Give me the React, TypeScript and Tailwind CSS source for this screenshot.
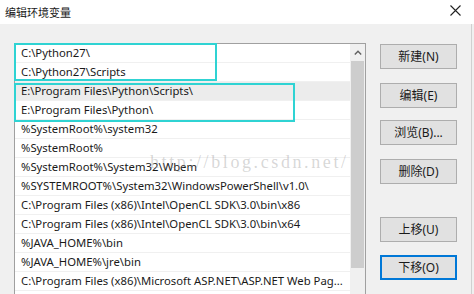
import React from "react";

const rows = [
  "C:\\Python27\\",
  "C:\\Python27\\Scripts",
  "E:\\Program Files\\Python\\Scripts\\",
  "E:\\Program Files\\Python\\",
  "%SystemRoot%\\system32",
  "%SystemRoot%",
  "%SystemRoot%\\System32\\Wbem",
  "%SYSTEMROOT%\\System32\\WindowsPowerShell\\v1.0\\",
  "C:\\Program Files (x86)\\Intel\\OpenCL SDK\\3.0\\bin\\x86",
  "C:\\Program Files (x86)\\Intel\\OpenCL SDK\\3.0\\bin\\x64",
  "%JAVA_HOME%\\bin",
  "%JAVA_HOME%\\jre\\bin",
  "C:\\Program Files (x86)\\Microsoft ASP.NET\\ASP.NET Web Pag...",
];

const font = { fontFamily: '"Noto Sans", "Noto Sans CJK SC", sans-serif' };

function Btn({ label, className = "", focused = false }: { label: string; className?: string; focused?: boolean }) {
  return (
    <div
      className={`w-[77px] h-[25px] flex items-center justify-center text-[12px] text-[#1a1a1a] bg-[#e1e1e1] ${
        focused ? "border-2 border-[#0078d7]" : "border border-[#adadad]"
      } ${className}`}
    >
      {label}
    </div>
  );
}

export default function App() {
  return (
    <div
      className="relative w-[474px] h-[294px] overflow-hidden bg-[#f0f0f0] flex flex-col"
      style={font}
    >
      {/* title bar */}
      <div className="h-[24px] bg-white flex items-center justify-between pl-[5px] pr-[12px] shrink-0">
        <span className="text-[11px] text-[#1a1a1a]" style={{ fontFamily: '"Noto Sans CJK SC", sans-serif' }}>
          编辑环境变量
        </span>
        <svg width="11" height="11" viewBox="0 0 11 11" className="mr-[1px] -mt-[4px]">
          <path d="M0.5 0.5 L10.5 10.5 M10.5 0.5 L0.5 10.5" stroke="#222" strokeWidth="1.1" />
        </svg>
      </div>

      {/* body */}
      <div className="flex flex-1 pl-[14px] pt-[19px] min-h-0">
        {/* list */}
        <div className="w-[352px] flex border border-[#a0a0a0] border-b-0 bg-white min-h-0">
          <div className="flex-1 flex flex-col overflow-hidden">
            {rows.map((r, i) => (
              <div
                key={i}
                className={`h-[19px] shrink-0 flex items-center pl-[6px] text-[11.3px] text-[#1a1a1a] border-b border-[#f0f0f0] whitespace-nowrap ${
                  i === 2 ? "bg-[#ececec]" : ""
                }`}
              >
                {r}
              </div>
            ))}
          </div>
          {/* scrollbar */}
          <div className="w-[15px] flex flex-col bg-[#f0f0f0]">
            <div className="h-[17px] flex items-center justify-center">
              <svg width="8" height="5" viewBox="0 0 8 5">
                <path d="M0.8 4.5 L4 1.2 L7.2 4.5" stroke="#606060" strokeWidth="1.4" fill="none" />
              </svg>
            </div>
            <div className="mx-[1px] h-[207px] bg-[#cdcdcd]" />
          </div>
        </div>

        {/* buttons */}
        <div className="flex flex-col ml-[14px]">
          <Btn label="新建(N)" className="mt-[1px]" />
          <Btn label="编辑(E)" className="mt-[14px]" />
          <Btn label="浏览(B)..." className="mt-[12px]" />
          <Btn label="删除(D)" className="mt-[14px]" />
          <Btn label="上移(U)" className="mt-[33px]" />
          <Btn label="下移(O)" className="mt-[13px]" focused />
        </div>
        <div className="ml-auto w-[3px] border-l border-[#d0d0d0] self-stretch -mt-[19px]" />
      </div>

      {/* annotation boxes */}
      <div className="absolute left-[14px] top-[43px] w-[203px] h-[38px] border-2 border-[#2fd3d3]" />
      <div className="absolute left-[14px] top-[83px] w-[281px] h-[39px] border-2 border-[#2fd3d3]" />

      {/* watermark */}
      <div
        className="absolute left-[150px] top-[149px] text-[18px] tracking-[2.6px] text-[rgba(140,140,140,0.35)] pointer-events-none"
        style={{ fontFamily: '"Liberation Serif", serif' }}
      >
        http://blog.csdn.net/
      </div>
    </div>
  );
}
